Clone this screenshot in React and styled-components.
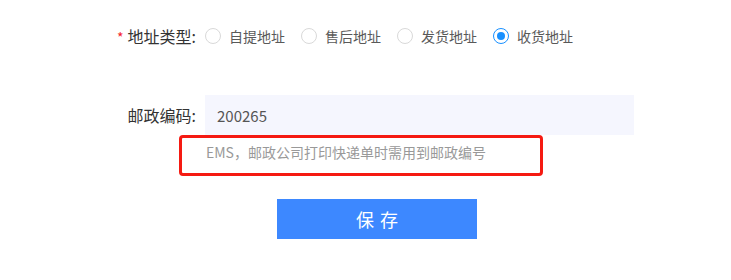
import React, { useState } from "react";
import styled, { createGlobalStyle } from "styled-components";

const GlobalStyle = createGlobalStyle`
  html, body {
    margin: 0;
    padding: 0;
    background: #fff;
    font-family: "Noto Sans CJK SC", "Noto Sans", sans-serif;
  }
`;

const Page = styled.div`
  width: 731px;
  height: 280px;
  padding-top: 16px;
  box-sizing: border-box;
`;

const FormItem = styled.div`
  display: flex;
  align-items: center;
  height: 40px;
  margin-bottom: ${(p) => p.gap || 0}px;
`;

const Label = styled.label`
  width: 205px;
  box-sizing: border-box;
  padding-right: 9px;
  text-align: right;
  font-size: 16px;
  color: #333;
  flex-shrink: 0;
`;

const Star = styled.span`
  color: #f5222d;
  font-size: 14px;
  margin-right: 4px;
`;

const RadioGroup = styled.div`
  display: flex;
  align-items: center;
`;

const RadioItem = styled.label`
  display: flex;
  align-items: center;
  margin-right: 16px;
  cursor: pointer;
  font-size: 14px;
  color: #595959;
`;

const Circle = styled.span`
  width: 16px;
  height: 16px;
  box-sizing: border-box;
  border-radius: 50%;
  border: 1px solid ${(p) => (p.checked ? "#1890ff" : "#d9d9d9")};
  background: #fff;
  margin-right: 8px;
  display: flex;
  align-items: center;
  justify-content: center;
  &::after {
    content: "";
    width: 8px;
    height: 8px;
    border-radius: 50%;
    background: #1890ff;
    display: ${(p) => (p.checked ? "block" : "none")};
  }
`;

const Input = styled.input`
  width: 429px;
  height: 40px;
  box-sizing: border-box;
  border: none;
  outline: none;
  background: #f5f6fe;
  padding: 0 12px;
  font-family: inherit;
  font-size: 15px;
  color: #555;
`;

const HintRow = styled.div`
  padding-left: 206px;
  height: 64px;
  box-sizing: border-box;
  padding-top: 4px;
`;

const Hint = styled.div`
  position: relative;
  display: inline-block;
  font-size: 14px;
  line-height: 20px;
  color: #999;
`;

const Highlight = styled.span`
  position: absolute;
  left: -27px;
  top: -7px;
  width: 364px;
  height: 41px;
  box-sizing: border-box;
  border: 3px solid #f51a12;
  border-radius: 4px;
`;

const SaveButton = styled.button`
  margin-left: 277px;
  width: 200px;
  height: 40px;
  border: none;
  background: #3d88ff;
  color: #fff;
  font-family: inherit;
  font-size: 18px;
  letter-spacing: 6px;
  text-indent: 6px;
  cursor: pointer;
`;

const types = ["自提地址", "售后地址", "发货地址", "收货地址"];

export default function App() {
  const [type, setType] = useState("收货地址");
  const [zip, setZip] = useState("200265");

  return (
    <Page>
      <GlobalStyle />
      <FormItem gap={39}>
        <Label>
          <Star>*</Star>地址类型:
        </Label>
        <RadioGroup>
          {types.map((t) => (
            <RadioItem key={t} onClick={() => setType(t)}>
              <Circle checked={type === t} />
              {t}
            </RadioItem>
          ))}
        </RadioGroup>
      </FormItem>
      <FormItem>
        <Label>邮政编码:</Label>
        <Input value={zip} onChange={(e) => setZip(e.target.value)} />
      </FormItem>
      <HintRow>
        <Hint>
          EMS，邮政公司打印快递单时需用到邮政编号
          <Highlight />
        </Hint>
      </HintRow>
      <SaveButton>保存</SaveButton>
    </Page>
  );
}
